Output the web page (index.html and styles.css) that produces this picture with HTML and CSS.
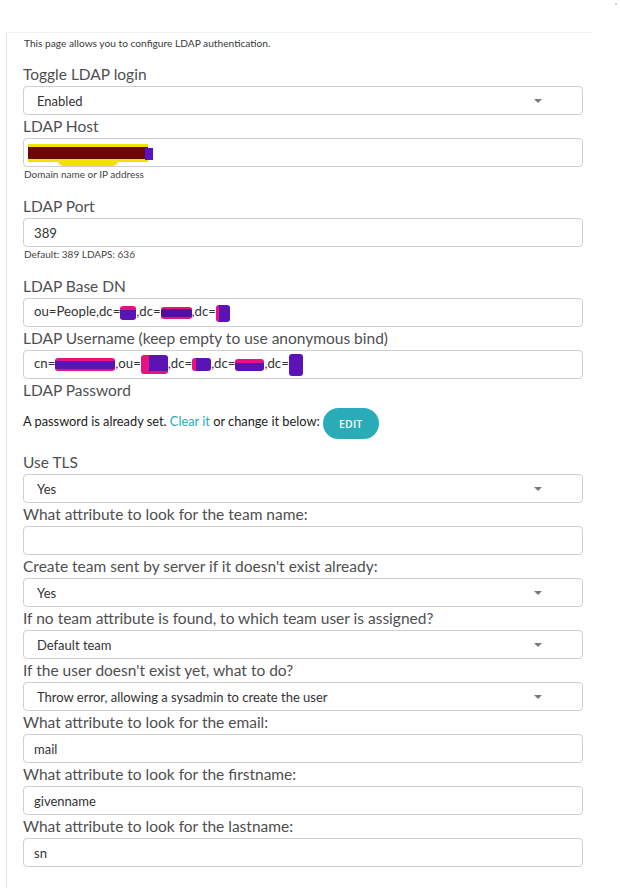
FILE: index.html
```html
<!DOCTYPE html>
<html lang="en">
<head>
<meta charset="utf-8">
<title>LDAP authentication</title>
<link rel="stylesheet" href="styles.css">
</head>
<body>
<span class="corner-dot"></span>
<div class="panel">
  <p class="intro">This page allows you to configure LDAP authentication.</p>

  <div class="group">
    <label class="label">Toggle LDAP login</label>
    <div class="control select"><span class="value">Enabled</span><span class="caret"></span></div>
  </div>

  <div class="group with-help">
    <label class="label">LDAP Host</label>
    <div class="control input"><span class="redact-host"></span></div>
    <p class="help">Domain name or IP address</p>
  </div>

  <div class="group with-help">
    <label class="label">LDAP Port</label>
    <div class="control input"><span class="value wide">389</span></div>
    <p class="help">Default: 389 LDAPS: 636</p>
  </div>

  <div class="group">
    <label class="label">LDAP Base DN</label>
    <div class="control input"><span class="value wide">ou=People,dc=<span class="blob b1"></span>,dc=<span class="blob b2"></span>,dc=<span class="blob b3"></span></span></div>
  </div>

  <div class="group">
    <label class="label">LDAP Username (keep empty to use anonymous bind)</label>
    <div class="control input"><span class="value wide">cn=<span class="blob u1"></span>,ou=<span class="blob u2"></span>,dc=<span class="blob u3"></span>,dc=<span class="blob u4"></span>,dc=<span class="blob u5"></span></span></div>
  </div>

  <div class="group password">
    <label class="label">LDAP Password</label>
    <div class="pw-line">
      <span class="pw-text">A password is already set. <a class="link" href="#">Clear it</a> or change it below:</span>
      <button class="btn-edit" type="button">EDIT</button>
    </div>
  </div>

  <div class="group">
    <label class="label">Use TLS</label>
    <div class="control select"><span class="value">Yes</span><span class="caret"></span></div>
  </div>

  <div class="group">
    <label class="label">What attribute to look for the team name:</label>
    <div class="control input"></div>
  </div>

  <div class="group">
    <label class="label">Create team sent by server if it doesn't exist already:</label>
    <div class="control select"><span class="value">Yes</span><span class="caret"></span></div>
  </div>

  <div class="group">
    <label class="label">If no team attribute is found, to which team user is assigned?</label>
    <div class="control select"><span class="value">Default team</span><span class="caret"></span></div>
  </div>

  <div class="group">
    <label class="label">If the user doesn't exist yet, what to do?</label>
    <div class="control select"><span class="value">Throw error, allowing a sysadmin to create the user</span><span class="caret"></span></div>
  </div>

  <div class="group">
    <label class="label">What attribute to look for the email:</label>
    <div class="control input"><span class="value">mail</span></div>
  </div>

  <div class="group">
    <label class="label">What attribute to look for the firstname:</label>
    <div class="control input"><span class="value">givenname</span></div>
  </div>

  <div class="group">
    <label class="label">What attribute to look for the lastname:</label>
    <div class="control input"><span class="value">sn</span></div>
  </div>
</div>
</body>
</html>
```
FILE: styles.css
```css
* { box-sizing: border-box; }

html, body {
  margin: 0;
  padding: 0;
  background: #ffffff;
  font-family: Lato, "Open Sans", "Liberation Sans", sans-serif;
  color: #333;
}

body {
  position: relative;
  height: 888px;
  overflow: hidden;
}

.corner-dot {
  position: absolute;
  top: 3px;
  left: 615px;
  width: 2px;
  height: 2px;
  background: #c4c4c4;
  border-radius: 1px;
}

.panel {
  margin: 32px 0 0 6px;
  width: 586px;
  min-height: 856px;
  border-left: 1px solid #e2e2e2;
  border-top: 1px solid #f3f3f3;
  padding: 3px 0 0 16px;
}

.intro {
  margin: 0 0 13px 1px;
  font-size: 10.2px;
  line-height: 14px;
  color: #3a3a3a;
}

.group {
  width: 560px;
  display: flex;
  flex-direction: column;
}

.label {
  display: block;
  font-size: 15.5px;
  line-height: 23px;
  color: #4f4f4f;
  white-space: nowrap;
}

.control {
  height: 29px;
  border: 1px solid #cfcfcf;
  border-radius: 4px;
  background: #fff;
  display: flex;
  align-items: center;
  font-size: 13px;
  color: #333;
  position: relative;
}

.select { padding: 0 13px; }
.input { padding: 0 10px; }

.value { white-space: nowrap; }
.value.wide { font-size: 13.2px; }

.caret {
  position: absolute;
  left: 510px;
  top: 12px;
  width: 0;
  height: 0;
  border-left: 4px solid transparent;
  border-right: 4px solid transparent;
  border-top: 4px solid #7a7a7a;
}

.with-help .help {
  margin: 0 0 13px 1px;
  font-size: 10px;
  line-height: 15px;
  color: #444;
}

/* redaction marks */
.redact-host {
  display: inline-block;
  position: relative;
  margin-left: -6px;
  width: 120px;
  height: 12px;
  background: #6d0707;
  box-shadow: 0 -3px 0 #f2e200, 0 3px 0 #f2e200;
}
.redact-host::after {
  content: "";
  position: absolute;
  right: -5px;
  top: 1px;
  width: 8px;
  height: 12px;
  background: #5a10c8;
}
.redact-host::before {
  content: "";
  position: absolute;
  left: 30px;
  bottom: -7px;
  width: 60px;
  height: 5px;
  border-radius: 0 0 30px 30px;
  background: #f2e200;
}

.blob {
  display: inline-block;
  vertical-align: middle;
  background: #5c13b6;
  border-radius: 3px;
}
.b1 { width: 16px; height: 14px; border-top: 4px solid #e5127f; }
.b2 { width: 31px; height: 12px; border-top: 2px solid #e5127f; border-bottom: 2px solid #e5127f; background: #4d10a8; }
.b3 { width: 14px; height: 17px; border-left: 3px solid #e5127f; }
.u1 { width: 60px; height: 13px; border-top: 3px solid #e5127f; border-bottom: 2px solid #e5127f; }
.u2 { width: 27px; height: 19px; border-left: 8px solid #e5127f; border-bottom: 3px solid #e5127f; }
.u3 { width: 19px; height: 13px; border-left: 4px solid #e5127f; }
.u4 { width: 29px; height: 12px; border-top: 4px solid #e5127f; }
.u5 { width: 14px; height: 22px; }

.password .pw-line {
  display: flex;
  align-items: center;
  margin: 6px 0 12px 0;
  height: 31px;
}

.pw-text {
  font-size: 12.8px;
  color: #222;
  white-space: nowrap;
  padding-bottom: 6px;
}

.link {
  color: #2aabb8;
  text-decoration: none;
}

.btn-edit {
  margin-left: 3px;
  width: 56px;
  height: 31px;
  border: none;
  border-radius: 16px;
  background: #2aabb8;
  color: #fff;
  font-family: "Open Sans", Lato, sans-serif;
  font-weight: 600;
  font-size: 10.5px;
  letter-spacing: 0.2px;
  padding: 0;
}
```
